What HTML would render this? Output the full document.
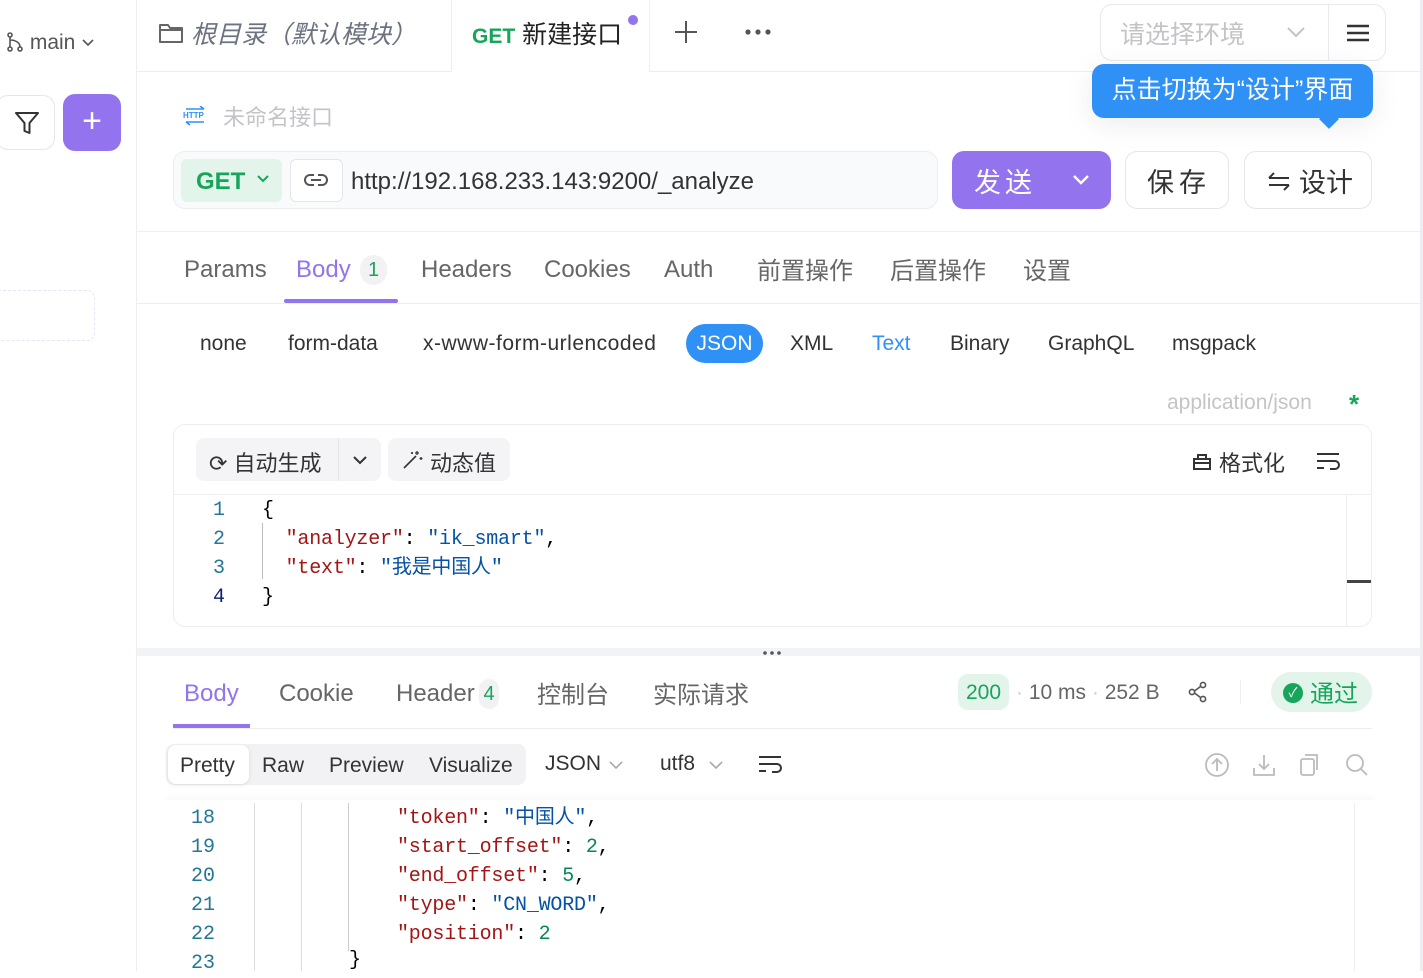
<!DOCTYPE html>
<html><head><meta charset="utf-8"><style>
*{box-sizing:border-box;margin:0;padding:0}
body{width:1423px;height:971px;overflow:hidden;background:#fff;font-family:"Liberation Sans","Noto Sans CJK SC",sans-serif;color:#333;position:relative}
.a{position:absolute;white-space:nowrap}
.mono{font-family:"Liberation Mono","Noto Sans CJK SC",monospace}
.k{color:#a31515}.s{color:#0451a5}.n{color:#098658}
</style></head><body>
<!-- sidebar -->
<div class="a" style="left:136px;top:0;width:1px;height:971px;background:#eceef2"></div>
<div class="a" style="left:6px;top:31px;font-size:21px;color:#555">
<svg width="18" height="22" viewBox="0 0 18 22" style="vertical-align:-4px"><circle cx="4" cy="4" r="2" fill="none" stroke="#555" stroke-width="1.6"/><circle cx="4" cy="18" r="2" fill="none" stroke="#555" stroke-width="1.6"/><circle cx="14" cy="18" r="2" fill="none" stroke="#555" stroke-width="1.6"/><path d="M4 6v10M4 9c6 0 10 3 10 7" fill="none" stroke="#555" stroke-width="1.6"/></svg> main <svg width="14" height="10" style="vertical-align:1px"><path d="M2 2l5 5 5-5" fill="none" stroke="#555" stroke-width="1.6"/></svg></div>
<div class="a" style="left:-4px;top:95px;width:59px;height:55px;border:1px solid #e6e6ea;border-radius:12px"></div>
<svg class="a" style="left:14px;top:110px" width="26" height="26" viewBox="0 0 26 26"><path d="M2 3h22l-8.5 10v10l-5 -2v-8z" fill="none" stroke="#333" stroke-width="2" stroke-linejoin="round"/></svg>
<div class="a" style="left:63px;top:94px;width:58px;height:57px;background:#9373ee;border-radius:12px;color:#fff;font-size:34px;text-align:center;line-height:54px;font-weight:300">+</div>
<div class="a" style="left:-10px;top:290px;width:105px;height:51px;border:1.5px dashed #e6e4f8;border-radius:8px"></div>
<div class="a" style="left:1420px;top:0;width:3px;height:971px;background:#eeeef2"></div>
<!-- top tabs -->
<div class="a" style="left:137px;top:71px;width:1283px;height:1px;background:#eceef2"></div>
<div class="a" style="left:451px;top:0;width:1px;height:72px;background:#eceef2"></div>
<div class="a" style="left:649px;top:0;width:1px;height:72px;background:#eceef2"></div>
<div class="a" style="left:452px;top:69px;width:197px;height:4px;background:#fff"></div>
<div class="a" style="left:158px;top:15px;font-size:25px;color:#6b7280;font-style:italic">
<svg width="26" height="22" viewBox="0 0 26 22" style="vertical-align:-1px"><path d="M2 3h8l2 3h12v14H2z" fill="none" stroke="#666" stroke-width="2" stroke-linejoin="round"/><path d="M2 8h22" stroke="#666" stroke-width="2"/></svg> 根目录（默认模块）</div>
<div class="a" style="left:472px;top:15px;font-size:25px;color:#222"><span style="color:#17a55b;font-weight:bold;font-size:21px">GET</span> 新建接口</div>
<div class="a" style="left:628px;top:15px;width:10px;height:10px;border-radius:50%;background:#9373ee"></div>
<svg class="a" style="left:674px;top:20px" width="24" height="24"><path d="M12 1v22M1 12h22" stroke="#555" stroke-width="2"/></svg>
<svg class="a" style="left:744px;top:28px" width="28" height="8"><circle cx="4" cy="4" r="2.6" fill="#555"/><circle cx="14" cy="4" r="2.6" fill="#555"/><circle cx="24" cy="4" r="2.6" fill="#555"/></svg>
<div class="a" style="left:1100px;top:4px;width:286px;height:57px;border:1px solid #e9e9ee;border-radius:12px"></div>
<div class="a" style="left:1328px;top:4px;width:1px;height:57px;background:#e9e9ee"></div>
<div class="a" style="left:1120px;top:15px;font-size:25px;color:#c4c4c8">请选择环境</div>
<svg class="a" style="left:1286px;top:26px" width="20" height="12"><path d="M2 2l8 8 8-8" fill="none" stroke="#c4c4c8" stroke-width="2"/></svg>
<svg class="a" style="left:1346px;top:24px" width="24" height="18"><path d="M1 2h22M1 9h22M1 16h22" stroke="#333" stroke-width="2.4"/></svg>
<!-- tooltip -->
<div class="a" style="left:1092px;top:64px;width:281px;height:54px;background:#2f91f5;border-radius:12px;color:#fff;font-size:25px;line-height:52px;text-align:center;box-shadow:0 6px 30px rgba(0,0,0,.08)">点击切换为“设计”界面</div>
<div class="a" style="left:1322px;top:112px;width:14px;height:14px;background:#2f91f5;transform:rotate(45deg)"></div>
<!-- name -->
<svg class="a" style="left:182px;top:106px" width="26" height="20"><path d="M4 3h18M18 0l4 3M22 16H4M8 19l-4-3" stroke="#2f91f5" stroke-width="1.6" fill="none"/><text x="1" y="12" font-size="8" font-weight="bold" fill="#2f91f5" font-family="Liberation Sans">HTTP</text></svg>
<div class="a" style="left:223px;top:100px;font-size:22px;color:#c4c4c8">未命名接口</div>
<!-- url bar -->
<div class="a" style="left:173px;top:151px;width:765px;height:58px;border:1px solid #eceef2;border-radius:12px;background:#f9fafb"></div>
<div class="a" style="left:181px;top:159px;width:101px;height:43px;background:#e3f5ea;border-radius:6px"></div>
<div class="a" style="left:196px;top:168px;font-size:24px;font-weight:bold;color:#17a55b">GET</div>
<svg class="a" style="left:256px;top:174px" width="14" height="9"><path d="M2 2l5 5 5-5" fill="none" stroke="#17a55b" stroke-width="2"/></svg>
<div class="a" style="left:290px;top:159px;width:53px;height:43px;border:1px solid #e6e6ea;border-radius:6px;background:#fff"></div>
<svg class="a" style="left:304px;top:171px" width="24" height="18"><path d="M10 4H6a5 5 0 0 0 0 10h4M14 4h4a5 5 0 0 1 0 10h-4M7 9h10" fill="none" stroke="#555" stroke-width="2"/></svg>
<div class="a" style="left:351px;top:168px;font-size:24px;color:#333">http://192.168.233.143:9200/_analyze</div>
<div class="a" style="left:952px;top:151px;width:159px;height:58px;background:#9373ee;border-radius:12px"></div>
<div class="a" style="left:974px;top:161px;font-size:27px;color:#fff;letter-spacing:4px">发送</div>
<svg class="a" style="left:1072px;top:174px" width="18" height="12"><path d="M2 2l7 7 7-7" fill="none" stroke="#fff" stroke-width="2.4"/></svg>
<div class="a" style="left:1125px;top:151px;width:104px;height:58px;border:1px solid #e6e6ea;border-radius:12px"></div>
<div class="a" style="left:1147px;top:161px;font-size:27px;color:#333;letter-spacing:5px">保存</div>
<div class="a" style="left:1244px;top:151px;width:128px;height:58px;border:1px solid #e6e6ea;border-radius:12px"></div>
<svg class="a" style="left:1267px;top:171px" width="24" height="20"><path d="M2 7h20M2 7l5-5M22 14H2M22 14l-5 5" fill="none" stroke="#333" stroke-width="2"/></svg>
<div class="a" style="left:1299px;top:161px;font-size:27px;color:#333">设计</div>
<!-- request tabs -->
<div class="a" style="left:137px;top:231px;width:1283px;height:1px;background:#f0f0f3"></div>
<div class="a" style="left:137px;top:303px;width:1283px;height:1px;background:#eceef2"></div>
<div class="a" style="left:184px;top:256px;font-size:24px;color:#666">Params</div>
<div class="a" style="left:296px;top:256px;font-size:24px;color:#9373ee">Body</div>
<div class="a" style="left:360px;top:255px;width:27px;height:30px;border-radius:14px;background:#f2f2f4;color:#17a55b;font-size:20px;text-align:center;line-height:30px">1</div>
<div class="a" style="left:284px;top:299px;width:114px;height:4px;background:#9373ee;border-radius:2px"></div>
<div class="a" style="left:421px;top:256px;font-size:24px;color:#666">Headers</div>
<div class="a" style="left:544px;top:256px;font-size:24px;color:#666">Cookies</div>
<div class="a" style="left:664px;top:256px;font-size:24px;color:#666">Auth</div>
<div class="a" style="left:757px;top:251px;font-size:24px;color:#666">前置操作</div>
<div class="a" style="left:890px;top:251px;font-size:24px;color:#666">后置操作</div>
<div class="a" style="left:1023px;top:251px;font-size:24px;color:#666">设置</div>
<!-- body types -->
<div class="a" style="left:200px;top:332px;font-size:21px;color:#333">none</div>
<div class="a" style="left:288px;top:332px;font-size:21px;color:#333">form-data</div>
<div class="a" style="left:423px;top:332px;font-size:21px;color:#333;letter-spacing:0.5px">x-www-form-urlencoded</div>
<div class="a" style="left:686px;top:324px;width:77px;height:39px;border-radius:20px;background:#2f91f5;color:#fff;font-size:21px;text-align:center;line-height:39px">JSON</div>
<div class="a" style="left:790px;top:332px;font-size:21px;color:#333">XML</div>
<div class="a" style="left:872px;top:332px;font-size:21px;color:#2f91f5">Text</div>
<div class="a" style="left:950px;top:332px;font-size:21px;color:#333">Binary</div>
<div class="a" style="left:1048px;top:332px;font-size:21px;color:#333">GraphQL</div>
<div class="a" style="left:1172px;top:332px;font-size:21px;color:#333">msgpack</div>
<div class="a" style="left:1167px;top:391px;font-size:21px;color:#c4c4c8">application/json</div>
<div class="a" style="left:1349px;top:389px;font-size:26px;color:#17a55b;font-weight:bold">*</div>
<!-- editor -->
<div class="a" style="left:173px;top:424px;width:1199px;height:203px;border:1px solid #eceef2;border-radius:12px"></div>
<div class="a" style="left:174px;top:494px;width:1197px;height:1px;background:#eceef2"></div>
<div class="a" style="left:196px;top:438px;width:185px;height:43px;background:#f4f4f6;border-radius:8px"></div>
<div class="a" style="left:338px;top:438px;width:1px;height:43px;background:#e4e4e8"></div>
<div class="a" style="left:209px;top:446px;font-size:22px;color:#333">⟳ 自动生成</div>
<svg class="a" style="left:352px;top:455px" width="16" height="10"><path d="M2 2l6 6 6-6" fill="none" stroke="#333" stroke-width="2"/></svg>
<div class="a" style="left:388px;top:438px;width:122px;height:43px;background:#f4f4f6;border-radius:8px"></div>
<svg class="a" style="left:402px;top:450px" width="22" height="20"><path d="M2 18L14 6" stroke="#333" stroke-width="1.6"/><path d="M15 1v4M13 3h4M19 7v3M17.5 8.5h3M10 2v2M9 3h2" stroke="#333" stroke-width="1.3"/></svg>
<div class="a" style="left:430px;top:446px;font-size:22px;color:#333">动态值</div>
<svg class="a" style="left:1191px;top:451px" width="22" height="20"><path d="M3 8h16v10H3zM7 8V4h8v4M3 12h16" fill="none" stroke="#333" stroke-width="2"/></svg>
<div class="a" style="left:1219px;top:446px;font-size:22px;color:#333">格式化</div>
<svg class="a" style="left:1316px;top:451px" width="24" height="20"><path d="M1 3h22M1 10h18a4 4 0 0 1 0 8h-5M1 17h7" fill="none" stroke="#333" stroke-width="2"/></svg>
<div class="a" style="left:1346px;top:495px;width:1px;height:131px;background:#eceef2"></div>
<div class="a" style="left:1347px;top:580px;width:24px;height:3px;background:#444"></div>
<div class="a" style="left:262px;top:523px;width:1px;height:56px;background:#bbb"></div>
<div class="a mono" style="left:175px;top:496px;font-size:20px;line-height:29px;color:#237893;width:50px;text-align:right">1<br>2<br>3<br><span style="color:#0b216f">4</span></div>
<div class="a mono" style="left:262px;top:496px;font-size:20px;line-height:29px;color:#000;letter-spacing:-0.2px">{<br>&nbsp;&nbsp;<span class="k">"analyzer"</span>: <span class="s">"ik_smart"</span>,<br>&nbsp;&nbsp;<span class="k">"text"</span>: <span class="s">"我是中国人"</span><br>}</div>
<!-- splitter -->
<div class="a" style="left:137px;top:648px;width:1283px;height:8px;background:#f2f3f6"></div>
<svg class="a" style="left:762px;top:650px" width="20" height="6"><circle cx="3" cy="3" r="1.8" fill="#555"/><circle cx="10" cy="3" r="1.8" fill="#555"/><circle cx="17" cy="3" r="1.8" fill="#555"/></svg>
<!-- response tabs -->
<div class="a" style="left:173px;top:728px;width:1199px;height:1px;background:#eceef2"></div>
<div class="a" style="left:184px;top:680px;font-size:24px;color:#9373ee">Body</div>
<div class="a" style="left:173px;top:724px;width:77px;height:4px;background:#9373ee"></div>
<div class="a" style="left:279px;top:680px;font-size:24px;color:#666">Cookie</div>
<div class="a" style="left:396px;top:680px;font-size:24px;color:#666">Header</div>
<div class="a" style="left:479px;top:679px;width:20px;height:30px;border-radius:10px;background:#f2f2f4;color:#17a55b;font-size:20px;text-align:center;line-height:30px">4</div>
<div class="a" style="left:537px;top:675px;font-size:24px;color:#666">控制台</div>
<div class="a" style="left:653px;top:675px;font-size:24px;color:#666">实际请求</div>
<div class="a" style="left:958px;top:674px;width:51px;height:36px;border-radius:10px;background:#e3f5ea;color:#17a55b;font-size:21px;text-align:center;line-height:37px">200</div>
<div class="a" style="left:1016px;top:681px;font-size:21px;color:#666"><span style="color:#ccc">·</span> 10 ms <span style="color:#ccc">·</span> 252 B</div>
<svg class="a" style="left:1187px;top:681px" width="22" height="22"><circle cx="16" cy="4" r="2.6" fill="none" stroke="#555" stroke-width="1.6"/><circle cx="5" cy="11" r="2.6" fill="none" stroke="#555" stroke-width="1.6"/><circle cx="16" cy="18" r="2.6" fill="none" stroke="#555" stroke-width="1.6"/><path d="M7.5 10l6-4.5M7.5 12l6 4.5" stroke="#555" stroke-width="1.6"/></svg>
<div class="a" style="left:1240px;top:680px;width:1px;height:24px;background:#eceef2"></div>
<div class="a" style="left:1271px;top:672px;width:101px;height:40px;border-radius:20px;background:#e3f5ea"></div>
<div class="a" style="left:1283px;top:683px;width:20px;height:20px;border-radius:50%;background:#17a55b;color:#fff;font-size:13px;text-align:center;line-height:20px">✓</div>
<div class="a" style="left:1310px;top:674px;font-size:24px;color:#17a55b">通过</div>
<!-- view modes -->
<div class="a" style="left:166px;top:744px;width:360px;height:41px;background:#f2f2f4;border-radius:8px"></div>
<div class="a" style="left:168px;top:745px;width:81px;height:39px;background:#fff;border-radius:8px;box-shadow:0 1px 4px rgba(0,0,0,.1)"></div>
<div class="a" style="left:180px;top:754px;font-size:21px;color:#333">Pretty</div>
<div class="a" style="left:262px;top:754px;font-size:21px;color:#333">Raw</div>
<div class="a" style="left:329px;top:754px;font-size:21px;color:#333">Preview</div>
<div class="a" style="left:429px;top:754px;font-size:21px;color:#333">Visualize</div>
<div class="a" style="left:545px;top:752px;font-size:21px;color:#333">JSON</div>
<svg class="a" style="left:608px;top:760px" width="16" height="10"><path d="M2 2l6 6 6-6" fill="none" stroke="#aaa" stroke-width="1.6"/></svg>
<div class="a" style="left:660px;top:752px;font-size:21px;color:#333">utf8</div>
<svg class="a" style="left:708px;top:760px" width="16" height="10"><path d="M2 2l6 6 6-6" fill="none" stroke="#aaa" stroke-width="1.6"/></svg>
<svg class="a" style="left:758px;top:754px" width="24" height="20"><path d="M1 3h22M1 10h18a4 4 0 0 1 0 8h-5M1 17h7" fill="none" stroke="#333" stroke-width="2"/></svg>
<svg class="a" style="left:1204px;top:752px" width="170" height="26" fill="none" stroke="#bbb" stroke-width="1.8"><circle cx="13" cy="13" r="11"/><path d="M13 19V7M8 12l5-5 5 5"/><path d="M60 3v14M55 12l5 5 5-5M50 16v7h20v-7"/><rect x="97" y="7" width="13" height="16" rx="2"/><path d="M101 3h12v15"/><circle cx="151" cy="11" r="8"/><path d="M157 17l6 6"/></svg>
<div class="a" style="left:166px;top:800px;width:1208px;height:4px;box-shadow:0 -3px 6px rgba(0,0,0,.04)"></div>
<!-- response code -->
<div class="a" style="left:254px;top:803px;width:1px;height:168px;background:#ddd"></div>
<div class="a" style="left:301px;top:803px;width:1px;height:168px;background:#ddd"></div>
<div class="a" style="left:348px;top:803px;width:1px;height:148px;background:#ccc"></div>
<div class="a" style="left:1354px;top:803px;width:1px;height:168px;background:#eee"></div>
<div class="a mono" style="left:175px;top:804px;font-size:20px;line-height:29px;color:#237893;width:40px;text-align:right">18<br>19<br>20<br>21<br>22<br>23</div>
<div class="a mono" style="left:397px;top:804px;font-size:20px;line-height:29px;color:#000;letter-spacing:-0.2px"><span class="k">"token"</span>: <span class="s">"中国人"</span>,<br><span class="k">"start_offset"</span>: <span class="n">2</span>,<br><span class="k">"end_offset"</span>: <span class="n">5</span>,<br><span class="k">"type"</span>: <span class="s">"CN_WORD"</span>,<br><span class="k">"position"</span>: <span class="n">2</span></div>
<div class="a mono" style="left:349px;top:949px;font-size:20px;color:#000">}</div>
</body></html>
